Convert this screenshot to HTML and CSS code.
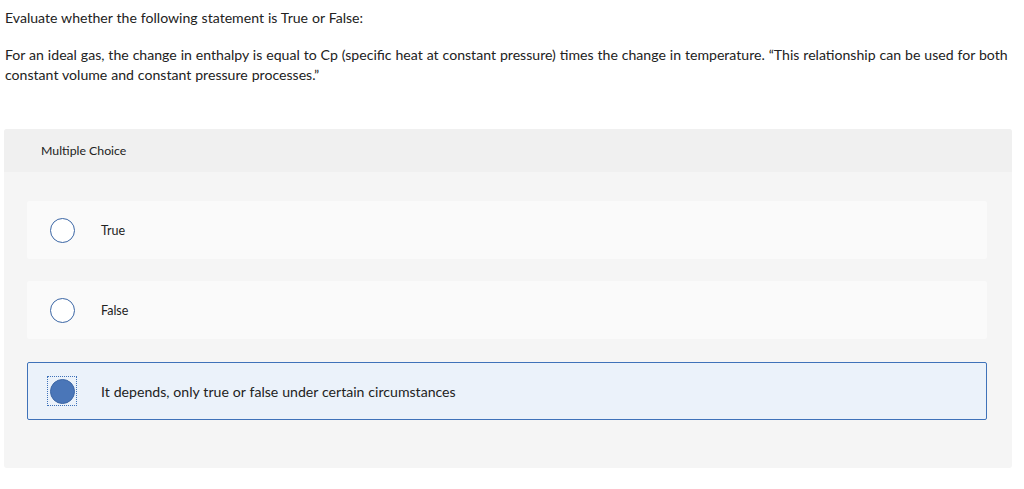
FILE: index.html
```html
<!DOCTYPE html>
<html>
<head>
<meta charset="utf-8">
<link rel="stylesheet" href="styles.css">
</head>
<body>
<div class="page">
  <div class="prompt">
    <p class="line">Evaluate whether the following statement is True or False:</p>
    <p class="line">For an ideal gas, the change in enthalpy is equal to Cp (specific heat at constant pressure) times the change in temperature. “This relationship can be used for both constant volume and constant pressure processes.”</p>
  </div>
  <div class="card">
    <div class="card-head">Multiple Choice</div>
    <div class="card-body">
      <div class="option">
        <span class="slot"><span class="radio"></span></span>
        <span class="label">True</span>
      </div>
      <div class="option">
        <span class="slot"><span class="radio"></span></span>
        <span class="label">False</span>
      </div>
      <div class="option selected">
        <span class="slot focus"><span class="radio"></span></span>
        <span class="label">It depends, only true or false under certain circumstances</span>
      </div>
    </div>
  </div>
</div>
</body>
</html>
```
FILE: styles.css
```css
html, body {
  margin: 0;
  padding: 0;
  background: #ffffff;
}
body {
  font-family: Lato, "Open Sans", sans-serif;
  color: #222222;
}
.page {
  padding: 8px 12px 0 4px;
}
.prompt {
  padding-left: 1px;
  font-size: 14.1px;
  line-height: 20px;
  word-spacing: 0.3px;
}
.line {
  margin: 0 0 17px 0;
}
.card {
  margin-top: 44px;
  background: #f5f5f5;
  border-radius: 3px;
  overflow: hidden;
}
.card-head {
  background: #f0f0f0;
  height: 43px;
  display: flex;
  align-items: center;
  padding-left: 37px;
  font-size: 12.3px;
}
.card-body {
  padding: 29px 25px 48px 23px;
  display: flex;
  flex-direction: column;
  gap: 22px;
}
.option {
  height: 58px;
  box-sizing: border-box;
  background: #fafafa;
  border: 1px solid transparent;
  border-radius: 2px;
  display: flex;
  align-items: center;
  padding-left: 19px;
  font-size: 12.5px;
}
.option.selected {
  margin-top: 1px;
  background: #ebf2fa;
  border-color: #3f72b9;
  font-size: 14.1px;
  word-spacing: 0.3px;
}
.slot {
  width: 30px;
  height: 30px;
  box-sizing: border-box;
  display: flex;
  align-items: center;
  justify-content: center;
  flex: none;
}
.radio {
  width: 25px;
  height: 25px;
  box-sizing: border-box;
  border: 1px solid #3b66a5;
  border-radius: 50%;
  background: #ffffff;
  flex: none;
}
.label {
  margin-left: 24px;
}
.focus {
  border: 1px dotted #3f72b9;
}
.option.selected .radio {
  background: #4a76b8;
  border-color: #3b66a5;
}
```
